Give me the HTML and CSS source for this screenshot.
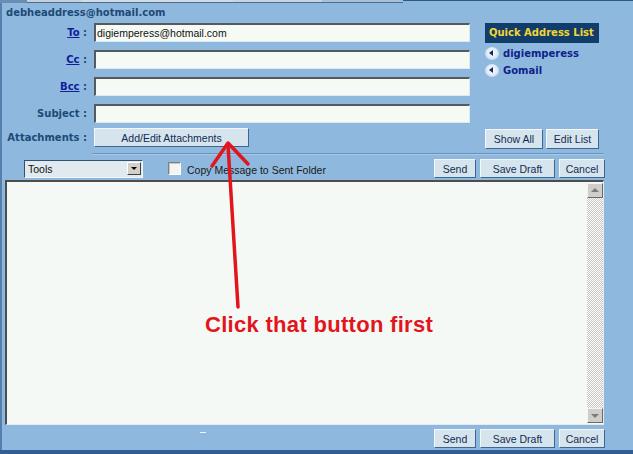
FILE: index.html
```html
<!DOCTYPE html>
<html lang="en">
<head>
  <meta charset="UTF-8" />
  <title>Compose</title>
  <link rel="stylesheet" href="styles.css">
</head>
<body>
  <div class="tabs">
    <span class="tab tab-a"></span>
    <span class="tab tab-b"></span>
    <span class="tab tab-c"></span>
    <span class="tab tab-d"></span>
    <span class="tab tab-e"></span>
    <span class="tab tab-rest"></span>
  </div>

  <div class="frame">
    <div class="account">debheaddress@hotmail.com</div>

    <div class="compose">
      <div class="fields">
        <div class="row">
          <span class="lbl"><a href="#">To</a> :</span>
          <div class="input">digiemperess@hotmail.com</div>
        </div>
        <div class="row">
          <span class="lbl"><a href="#">Cc</a> :</span>
          <div class="input"></div>
        </div>
        <div class="row">
          <span class="lbl"><a href="#">Bcc</a> :</span>
          <div class="input"></div>
        </div>
        <div class="row">
          <span class="lbl">Subject :</span>
          <div class="input"></div>
        </div>
      </div>

      <div class="quick">
        <div class="quick-title">Quick Address List</div>
        <ul class="quick-list">
          <li><span class="qicon"></span>digiemperess</li>
          <li><span class="qicon"></span>Gomail</li>
        </ul>
      </div>

      <div class="row">
        <span class="lbl">Attachments :</span>
        <div><button class="btn btn-attach">Add/Edit Attachments</button></div>
      </div>

      <div class="list-btns">
        <button class="btn btn-show">Show All</button>
        <button class="btn btn-edit">Edit List</button>
      </div>
    </div>

    <div class="sep"></div>

    <div class="toolbar">
      <div class="select">
        <span>Tools</span>
        <span class="select-btn"></span>
      </div>
      <span class="check"></span>
      <span class="check-text">Copy Message to Sent Folder</span>
      <div class="actions">
        <button class="btn btn-send">Send</button>
        <button class="btn btn-draft">Save Draft</button>
        <button class="btn btn-cancel">Cancel</button>
      </div>
    </div>

    <div class="editor">
      <div class="editor-text"></div>
      <div class="scroll">
        <span class="scroll-btn up"></span>
        <span class="scroll-track"></span>
        <span class="scroll-btn down"></span>
      </div>
    </div>

    <div class="footer">
      <span class="dash"></span>
      <div class="actions">
        <button class="btn btn-send">Send</button>
        <button class="btn btn-draft">Save Draft</button>
        <button class="btn btn-cancel">Cancel</button>
      </div>
    </div>
  </div>

  <div class="bottom"></div>

  <svg class="arrow" width="633" height="454" viewBox="0 0 633 454">
    <path d="M238 307 L228 145" />
    <path d="M212 166 L228 143 L248 164" />
  </svg>
  <div class="note">Click that button first</div>
</body>
</html>
```

FILE: styles.css
```css
* {
  margin: 0;
  padding: 0;
  box-sizing: border-box;
}
body {
  width: 633px;
  height: 454px;
  overflow: hidden;
  position: relative;
  background: #8fb8de;
  font-family: 'Liberation Sans', Arial, sans-serif;
  font-size: 10.5px;
  color: #122c52;
}
.tabs {
  display: flex;
  height: 3px;
}
.tab {
  height: 3px;
}
.tab-a { width: 27px; background: #6a8db3; }
.tab-b { width: 54px; background: #c4d1dd; border-bottom: 1px solid #4b6d92; }
.tab-c { width: 152px; background: #d3dce5; border-bottom: 1px solid #4b6d92; }
.tab-d { width: 89px; background: #c9d4df; border-bottom: 1px solid #4b6d92; }
.tab-e { width: 81px; background: #a9bfd5; border-bottom: 1px solid #4b6d92; }
.tab-rest { flex: 1; border-top: 1px solid #2c5a88; }
.frame {
  border-left: 2px solid #5580ad;
  padding-bottom: 2px;
}
.account {
  padding: 3px 0 0 4px;
  line-height: 14px;
  font-family: 'DejaVu Sans', Verdana, sans-serif;
  font-weight: bold;
  font-size: 10px;
  color: #1c4a76;
}
.compose {
  margin-top: 3px;
  display: grid;
  grid-template-columns: 468px 114px;
  column-gap: 15px;
  row-gap: 5px;
}
.fields {
  display: flex;
  flex-direction: column;
  gap: 8px;
}
.row {
  display: grid;
  grid-template-columns: 86px 376px;
  column-gap: 6px;
  align-items: center;
  height: 19px;
}
.lbl {
  text-align: right;
  padding-right: 1px;
  font-family: 'DejaVu Sans', Verdana, sans-serif;
  font-weight: bold;
  font-size: 10px;
  color: #1c4a76;
}
.lbl a {
  color: #101c98;
}
.input {
  height: 19px;
  padding-left: 1px;
  line-height: 16px;
  background: #f6faf4;
  border-style: solid;
  border-width: 2px 1px 1px 2px;
  border-color: #555a5e #dfe8ee #dfe8ee #555a5e;
  color: #111;
}
.quick-title {
  height: 20px;
  line-height: 20px;
  padding-left: 4px;
  background: #113d6a;
  color: #f3d634;
  font-family: 'DejaVu Sans', Verdana, sans-serif;
  font-weight: bold;
  font-size: 10px;
}
.quick-list {
  list-style: none;
  margin-top: 2px;
}
.quick-list li {
  display: flex;
  align-items: center;
  gap: 4px;
  height: 17px;
  font-family: 'DejaVu Sans', Verdana, sans-serif;
  font-weight: bold;
  font-size: 10px;
  color: #0e1f8c;
}
.qicon {
  width: 14px;
  height: 13px;
  border-radius: 50%;
  background: radial-gradient(circle at 50% 45%, #ffffff 0%, #e4edf6 45%, #a9c5e0 100%);
  position: relative;
}
.qicon::after {
  content: '';
  position: absolute;
  left: 4px;
  top: 3px;
  border-top: 3.5px solid transparent;
  border-bottom: 3.5px solid transparent;
  border-right: 4px solid #0e2a6e;
}
.btn {
  display: block;
  height: 19px;
  background: #d6e4ee;
  border-style: solid;
  border-width: 1px;
  border-color: #f2f7fb #3f6690 #3f6690 #f2f7fb;
  font-family: 'Liberation Sans', Arial, sans-serif;
  font-size: 10.5px;
  color: #122c52;
}
.btn-attach {
  width: 155px;
}
.list-btns {
  display: flex;
  gap: 3px;
  margin-top: 1px;
}
.btn-show { width: 58px; height: 20px; }
.btn-edit { width: 53px; height: 20px; }
.sep {
  margin: 4px 0 0 90px;
  width: 511px;
  border-top: 1px solid #6891bc;
  border-bottom: 1px solid #a9c9e6;
}
.toolbar {
  margin-top: 4px;
  height: 19px;
  display: flex;
  align-items: center;
  padding: 0 28px 0 22px;
}
.select {
  width: 119px;
  height: 18px;
  display: flex;
  align-items: center;
  justify-content: space-between;
  padding: 0 1px 0 3px;
  background: #e0eaef;
  border-style: solid;
  border-width: 1px;
  border-color: #34506e #f0f5f9 #f0f5f9 #34506e;
  color: #111;
}
.select-btn {
  width: 14px;
  height: 13px;
  background: #d4d0c8;
  border-style: solid;
  border-width: 1px;
  border-color: #ffffff #404040 #404040 #ffffff;
  position: relative;
}
.select-btn::after {
  content: '';
  position: absolute;
  left: 3px;
  top: 4px;
  border-left: 3px solid transparent;
  border-right: 3px solid transparent;
  border-top: 3px solid #000;
}
.check {
  margin-left: 25px;
  width: 13px;
  height: 13px;
  background: #f4f4f2;
  border-style: solid;
  border-width: 1px;
  border-color: #7d7d7d #ffffff #ffffff #7d7d7d;
  box-shadow: inset 1px 1px 0 #c8c8c4;
}
.check-text {
  margin-left: 6px;
  margin-top: 3px;
  color: #1a1a1a;
}
.actions {
  margin-left: auto;
  display: flex;
  gap: 4px;
}
.btn-send { width: 42px; }
.btn-draft { width: 75px; }
.btn-cancel { width: 46px; }
.editor {
  margin: 2px 0 0 3px;
  width: 599px;
  height: 245px;
  display: flex;
  background: #f5f9f5;
  border-style: solid;
  border-width: 2px 1px 1px 2px;
  border-color: #4d4d4d #e4ebf0 #e4ebf0 #4d4d4d;
}
.editor-text {
  flex: 1;
}
.scroll {
  width: 16px;
  display: flex;
  flex-direction: column;
  padding: 1px 0;
}
.scroll-btn {
  height: 15px;
  background: #d0cec8;
  border-style: solid;
  border-width: 1px;
  border-color: #f4f4f2 #6a6a6a #6a6a6a #f4f4f2;
  position: relative;
}
.scroll-btn::after {
  content: '';
  position: absolute;
  left: 3px;
  border-left: 4px solid transparent;
  border-right: 4px solid transparent;
}
.scroll-btn.up::after {
  top: 4px;
  border-bottom: 4px solid #7c7c7c;
}
.scroll-btn.down::after {
  top: 5px;
  border-top: 4px solid #7c7c7c;
}
.scroll-track {
  flex: 1;
  background: repeating-conic-gradient(#ffffff 0 25%, #c9c7c2 0 50%) 0 0 / 2px 2px;
}
.footer {
  margin-top: 4px;
  height: 19px;
  display: flex;
  padding-right: 28px;
}
.dash {
  margin: 3px 0 0 198px;
  width: 6px;
  height: 1px;
  background: #eef6ff;
}
.bottom {
  height: 4px;
  background: #2f5f94;
}
.arrow {
  position: absolute;
  left: 0;
  top: 0;
  pointer-events: none;
}
.arrow path {
  fill: none;
  stroke: #e3151c;
  stroke-width: 3.5;
  stroke-linecap: round;
  stroke-linejoin: round;
}
.note {
  position: absolute;
  left: 205px;
  top: 312px;
  line-height: 25px;
  font-family: 'Liberation Sans', Arial, sans-serif;
  font-weight: bold;
  font-size: 22px;
  letter-spacing: 0.3px;
  color: #e3151c;
  white-space: nowrap;
}
```
